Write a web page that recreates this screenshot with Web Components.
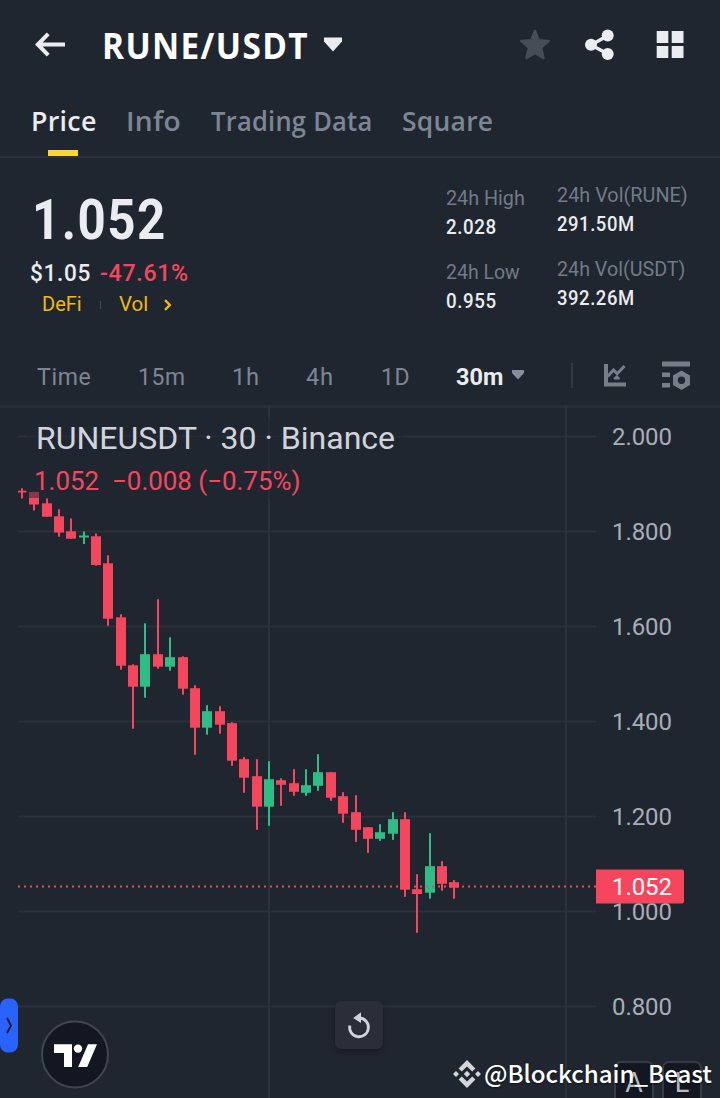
<!DOCTYPE html>
<html lang="en">
<head>
<meta charset="utf-8">
<title>RUNE/USDT</title>
<style>
    html, body {
        margin: 0;
        height: 1098px;
        overflow: hidden;
        background: #202630;
    }
</style>
</head>
<body>
<trade-page></trade-page>

<script>
class BaseElement extends HTMLElement {
    constructor() {
        super();
        this.attachShadow({mode: 'open'});
        const template = document.createElement('template');
        template.innerHTML = this.getTemplate().trim();
        this.shadowRoot.append(template.content.cloneNode(true));
    }
}

class TradePage extends BaseElement {
    getTemplate() {
        return `
            <style>
                :host {
                    display: flex;
                    flex-direction: column;
                    position: relative;
                    width: 720px;
                    height: 1098px;
                    overflow: hidden;
                    background: #202630;
                    color: #eaecef;
                    font-family: Roboto, sans-serif;
                }
                author-mark {
                    position: absolute;
                    left: 453px;
                    top: 1056px;
                }
            </style>
            <page-header></page-header>
            <page-tabs></page-tabs>
            <price-summary></price-summary>
            <interval-bar></interval-bar>
            <price-chart></price-chart>
            <author-mark></author-mark>
        `;
    }
}

class PageHeader extends BaseElement {
    getTemplate() {
        return `
            <style>
                :host {
                    display: flex;
                    align-items: center;
                    height: 90px;
                    padding: 0 36px 0 35px;
                    box-sizing: border-box;
                    font-family: "Open Sans", sans-serif;
                    color: #fff;
                }
                svg { display: block; flex: none; }
                fit-text { margin: 2px 15px 0 37px; }
                .actions { display: flex; align-items: center; gap: 35px; margin-left: auto; }
            </style>
            <svg width="30" height="26" viewBox="0 0 30 26" fill="none" stroke="#eaecef" stroke-width="4">
                <path d="M30 12.5H3M13.2 1.8L2.8 12.5L13.2 23.2"/>
            </svg>
            <fit-text w="206" size="35" weight="700" spacing=".04">RUNE/USDT</fit-text>
            <svg width="19" height="16" viewBox="-1 0 19 16"><path d="M0 0.5H18V4.5L9 14.5L0 4.5Z" fill="#eaecef"/></svg>
            <div class="actions">
                <svg width="30" height="32" viewBox="0 0 30 32">
                    <path d="M15 2L18.6 11.2L28.6 12L21 18.6L23.4 29L15 23.8L6.6 29L9 18.6L1.4 12L11.4 11.2Z" fill="#474d57" stroke="#474d57" stroke-width="2.6" stroke-linejoin="round"/>
                </svg>
                <svg width="29" height="32" viewBox="0 0 29 32" fill="#eaecef">
                    <path d="M6 16L23 6.5M6 16L23 25" stroke="#eaecef" stroke-width="3.6"/>
                    <circle cx="6" cy="15.8" r="6"/><circle cx="22.7" cy="6.4" r="6"/><circle cx="22.7" cy="25" r="6"/>
                </svg>
                <svg width="35" height="28" viewBox="0 0 35 28" fill="#eaecef">
                    <path d="M7.7 0.1H19.3V11.9H7.7ZM22.7 0.1H34.5V11.9H22.7ZM7.7 15.1H19.3V26.9H7.7ZM22.7 15.1H34.5V26.9H22.7Z"/>
                </svg>
            </div>
        `;
    }
}

class PageTabs extends BaseElement {
    getTemplate() {
        return `
            <style>
                :host {
                    display: flex;
                    gap: 30px;
                    height: 68px;
                    padding: 14px 31px 0;
                    box-sizing: border-box;
                    border-bottom: 2px solid #2b313b;
                    font-family: "Open Sans", sans-serif;
                    color: #7d8694;
                }
                .active {
                    display: flex;
                    flex-direction: column;
                    align-items: center;
                    width: 65px;
                    color: #eaecef;
                }
                .active::after {
                    content: "";
                    width: 30px;
                    height: 6.5px;
                    margin: 12px 1px 0 0;
                    background: #fcd535;
                }
            </style>
            <div class="active"><fit-text w="65" size="27.5" weight="600" spacing=".01">Price</fit-text></div>
            <fit-text w="55" size="27.5" weight="600" spacing=".01">Info</fit-text>
            <fit-text w="161" size="27.5" weight="600" spacing=".01">Trading Data</fit-text>
            <fit-text w="91" size="27.5" weight="600" spacing=".01">Square</fit-text>
        `;
    }
}

class PriceSummary extends BaseElement {
    getTemplate() {
        return `
            <style>
                :host {
                    display: flex;
                    height: 188px;
                    box-sizing: border-box;
                    padding-left: 30px;
                }
                .left { width: 416px; padding-top: 27px; }
                .big { margin-left: 2px; }
                .fiat { display: flex; gap: 10px; margin-top: 4px; }
                .down { color: #f6465d; }
                .tags { display: flex; align-items: center; margin: 4px 0 0 12px; color: #f0b90b; }
                .sep { width: 1px; height: 8px; margin: 0 18px; background: #474d57; }
                svg { margin-left: 15px; }
                .col { display: flex; flex-direction: column; gap: 24px; }
                .high { width: 111px; padding-top: 28px; }
                .vol { padding-top: 25px; }
            </style>
            <div class="left">
                <fit-text class="big" w="133" size="56" weight="700" spacing=".03">1.052</fit-text>
                <div class="fiat">
                    <fit-text w="60" size="23.5" weight="500" spacing=".03">$1.05</fit-text>
                    <fit-text class="down" w="88" size="23.5" weight="500" spacing=".03">-47.61%</fit-text>
                </div>
                <div class="tags">
                    <fit-text w="40" size="20.5">DeFi</fit-text>
                    <span class="sep"></span>
                    <fit-text w="29" size="20.5">Vol</fit-text>
                    <svg width="10" height="14" viewBox="0 0 10 14" fill="none" stroke="#f0b90b" stroke-width="2.4"><path d="M2 2.2L6.8 7L2 11.8"/></svg>
                </div>
            </div>
            <div class="col high">
                <stat-item><fit-text slot="label" w="79" size="20">24h High</fit-text><fit-text w="50" size="20" weight="500" spacing=".03">2.028</fit-text></stat-item>
                <stat-item><fit-text slot="label" w="74" size="20">24h Low</fit-text><fit-text w="50" size="20" weight="500" spacing=".03">0.955</fit-text></stat-item>
            </div>
            <div class="col vol">
                <stat-item><fit-text slot="label" w="131" size="20">24h Vol(RUNE)</fit-text><fit-text w="77" size="20" weight="500" spacing=".03">291.50M</fit-text></stat-item>
                <stat-item><fit-text slot="label" w="128" size="20">24h Vol(USDT)</fit-text><fit-text w="77" size="20" weight="500" spacing=".03">392.26M</fit-text></stat-item>
            </div>
        `;
    }
}

class StatItem extends BaseElement {
    getTemplate() {
        return `
            <style>
                :host { display: flex; flex-direction: column; gap: 4px; height: 50px; }
                .label { color: #737a87; height: 25px; }
            </style>
            <div class="label"><slot name="label"></slot></div>
            <slot></slot>
        `;
    }
}

class IntervalBar extends BaseElement {
    getTemplate() {
        return `
            <style>
                :host {
                    display: flex;
                    align-items: center;
                    height: 59px;
                    padding-left: 37px;
                    box-sizing: border-box;
                    color: #7d8694;
                }
                svg { display: block; flex: none; }
                fit-text { margin-top: 2px; }
                .on { color: #eaecef; }
            </style>
            <fit-text w="54" size="24" spacing=".03">Time</fit-text>
            <fit-text style="margin-left:47px" w="47" size="24" spacing=".03">15m</fit-text>
            <fit-text style="margin-left:47px" w="27" size="24" spacing=".03">1h</fit-text>
            <fit-text style="margin-left:47px" w="27" size="24" spacing=".03">4h</fit-text>
            <fit-text style="margin-left:48px" w="29" size="24" spacing=".03">1D</fit-text>
            <fit-text class="on" style="margin-left:46px" w="47" size="24" weight="700">30m</fit-text>
            <svg style="margin-left:9px" width="12" height="12" viewBox="0 0 12 12"><path d="M0 0H12V3L6 9.5L0 3Z" fill="#848e9c"/></svg>
            <svg style="margin-left:47px" width="2" height="25"><path d="M1 0V25" stroke="#3a404b" stroke-width="1.5"/></svg>
            <svg style="margin-left:31px" width="22" height="24" viewBox="0 0 22 24" fill="none" stroke="#777e8b">
                <path d="M2 0V20.6H22" stroke-width="4"/>
                <path d="M3.5 12.5L9.5 6L13.2 9.7L20.5 2" stroke-width="3"/>
                <path d="M12.8 11L16 14L15.5 15.5H10L9.5 14Z" fill="#777e8b" stroke="none"/>
            </svg>
            <svg style="margin-left:36px" width="28" height="30" viewBox="0 0 28 30" fill="#777e8b">
                <path d="M0 0.5H28V5.5H0ZM0 11.5H8V16H0ZM0 22H8V26.5H0Z"/>
                <path fill-rule="evenodd" d="M19.5 9.5L28 14.4V24L19.5 29L11 24V14.4ZM19.5 15.6A3.7 3.7 0 1 0 19.5 23A3.7 3.7 0 1 0 19.5 15.6Z"/>
            </svg>
        `;
    }
}

// [centre x, body top, body bottom, high, low, rising]
const CANDLES = [
    [22, 490.7, 492.5, 488.3, 498.5, 0],
    [34, 492, 504.5, 491.7, 510.5, 0],
    [47, 503.3, 516.7, 498.5, 516.7, 0],
    [59, 516.3, 532.5, 509.3, 536.7, 0],
    [71, 531.3, 538.7, 518.5, 538.7, 0],
    [84, 535.5, 537.5, 531.5, 544, 1],
    [96, 536.3, 565, 533.5, 565.7, 0],
    [108, 563.3, 618.7, 555.3, 625.7, 0],
    [121, 617.3, 665.7, 614.3, 669.7, 0],
    [133, 665.3, 686.7, 664.3, 728.7, 0],
    [145, 654.2, 686.7, 623.3, 697.7, 1],
    [158, 654.2, 666.7, 599.3, 668.7, 0],
    [170, 657.2, 666.7, 637.3, 670.7, 1],
    [183, 657.2, 688.7, 656.3, 694.7, 0],
    [195, 688.2, 727.7, 685.3, 754.7, 0],
    [207, 711.2, 727.7, 705.2, 734.7, 1],
    [220, 711.2, 724.7, 706.2, 733.7, 0],
    [232, 723.2, 760.7, 722.2, 765.8, 0],
    [244, 759.2, 777.7, 757.2, 792.8, 0],
    [257, 776.2, 806.7, 759.2, 829.8, 0],
    [269, 779.2, 806.7, 761.2, 825.8, 1],
    [281, 780.2, 784.8, 778.2, 805.8, 0],
    [294, 783.2, 791.8, 769.2, 795.8, 0],
    [306, 785.2, 792.8, 769.2, 795.8, 1],
    [318, 772.2, 785.8, 754.2, 790.8, 1],
    [331, 772.2, 797.7, 772.2, 800.8, 0],
    [343, 796.2, 813.7, 792.2, 822.8, 0],
    [356, 812.2, 829.8, 795.2, 841.8, 0],
    [368, 827.2, 838.8, 827.2, 852.8, 0],
    [380, 832.2, 838.8, 824.2, 840.8, 1],
    [393, 819.2, 833.7, 812.2, 839.8, 1],
    [405, 819.2, 889.7, 812.2, 896.8, 0],
    [417, 889.2, 894, 874.2, 932.8, 0],
    [430, 866.2, 892.7, 833.2, 898.7, 1],
    [442, 866.2, 883.8, 861.2, 890.7, 0],
    [454, 882.2, 887.7, 880.2, 898.7, 0]
];

class PriceChart extends BaseElement {
    getTemplate() {
        const prices = ['2.000', '1.800', '1.600', '1.400', '1.200', '1.000', '0.800'];
        const lines = prices.map((p, i) => `<path d="M18 ${436.6 + i * 95}H596"/>`).join('');
        const labels = prices.map((p, i) =>
            `<text x="612" y="${445.4 + i * 95}" textLength="60">${p}</text>`).join('');
        const candles = CANDLES.map(([x, top, bottom, high, low, up]) => `
            <g fill="${up ? '#2ebd85' : '#f6465d'}">
                <rect x="${x - 1}" y="${high}" width="2" height="${low - high}"/>
                <rect x="${Math.max(18, x - 5)}" y="${top}" width="${x === 22 ? 8.7 : 10}" height="${bottom - top}"/>
            </g>`).join('');
        return `
            <style>
                :host { display: block; position: relative; height: 693px; }
                .plot { display: block; font: 24px Roboto, sans-serif; }
                .legend { position: absolute; left: 26px; top: 13px; }
                .row { width: max-content; background: rgba(32, 38, 48, .5); }
                .name { height: 43px; padding: 0 8px 0 10px; color: #d1d4dc; }
                .values { display: flex; gap: 13px; height: 37px; padding: 0 6px 0 8px; color: #f6465d; }
                .name fit-text { padding-top: 2px; }
                .values fit-text { margin-top: 5px; }
                .drawer { position: absolute; left: 0; top: 593px; }
                .logo { position: absolute; left: 41px; top: 615px; }
                .reset {
                    position: absolute;
                    left: 335px;
                    top: 596px;
                    width: 48px;
                    height: 48px;
                    border-radius: 6px;
                    background: #2a2e39;
                    box-shadow: 0 3px 6px rgba(0, 0, 0, .3);
                }
                .scale { position: absolute; left: 614px; top: 656px; display: flex; gap: 8px; }
                .scale span {
                    width: 40px;
                    height: 60px;
                    box-sizing: border-box;
                    border: 2px solid #363a45;
                    border-radius: 7px;
                    background: #131722;
                    color: #b8bbc4;
                    font: 27px/40px Roboto, sans-serif;
                    text-align: center;
                }
            </style>
            <svg class="plot" width="720" height="693" viewBox="0 405 720 693">
                <path d="M0 406.5H720" stroke="#272d37" stroke-width="3"/>
                <g stroke="#2b313b" stroke-width="2">${lines}<path d="M269 405V1098M566 405V1098"/></g>
                ${candles}
                <path d="M18 886.5H596" stroke="#f6465d" stroke-width="2" stroke-dasharray="2 4"/>
                <g fill="#a9adb8">${labels}</g>
                <path d="M596 869.5H682Q684 869.5 684 871.5V901.5Q684 903.5 682 903.5H596Z" fill="#f6465d"/>
                <text x="612" y="895.4" textLength="60" fill="#fff">1.052</text>
            </svg>
            <div class="legend">
                <div class="row name"><fit-text w="359" size="30.5">RUNEUSDT · 30 · Binance</fit-text></div>
                <div class="row values">
                    <fit-text w="65" size="25.5">1.052</fit-text>
                    <fit-text w="189" size="25.5">−0.008 (−0.75%)</fit-text>
                </div>
            </div>
            <svg class="drawer" width="18" height="55" viewBox="0 0 18 55">
                <rect x="0" y="0.5" width="18" height="54" rx="8" fill="#2962ff"/>
                <path d="M7 20L11 27.5L7 35" fill="none" stroke="#131722" stroke-width="1.8"/>
            </svg>
            <svg class="logo" width="68" height="69" viewBox="41 1020 68 69">
                <circle cx="75" cy="1054.5" r="33" fill="#131722" stroke="#434651" stroke-width="2"/>
                <path d="M54 1044.3H72V1067H64V1053H54ZM88 1044.3H97L87.2 1067H78.2Z" fill="#fff"/>
                <circle cx="78" cy="1048.6" r="4.2" fill="#fff"/>
            </svg>
            <div class="reset">
                <svg width="48" height="48" viewBox="335 1001 48 48">
                    <path d="M349.8 1025.5A9.4 9.4 0 1 0 360 1018" fill="none" stroke="#d1d4dc" stroke-width="2.8"/>
                    <path d="M353.2 1018L361 1012.3V1023Z" fill="#d1d4dc"/>
                </svg>
            </div>
            <div class="scale"><span>A</span><span>L</span></div>
        `;
    }
}

class AuthorMark extends BaseElement {
    getTemplate() {
        return `
            <style>
                :host {
                    display: flex;
                    align-items: center;
                    gap: 3px;
                    height: 36px;
                    color: #fff;
                    font-family: "Noto Sans CJK SC", sans-serif;
                    text-shadow: 0 1px 2px rgba(0, 0, 0, .6);
                }
                fit-text { margin-bottom: 2px; }
            </style>
            <svg width="28" height="28" viewBox="0 0 28 28" fill="#d5d6d8">
                <path d="M14 0L22.4 8.4L19.2 11.6L14 6.4L8.8 11.6L5.6 8.4Z"/>
                <path d="M14 28L22.4 19.6L19.2 16.4L14 21.6L8.8 16.4L5.6 19.6Z"/>
                <path d="M3 11L6 14L3 17L0 14ZM25 11L28 14L25 17L22 14ZM14 10.8L17.2 14L14 17.2L10.8 14Z"/>
            </svg>
            <fit-text w="228" size="24" weight="500">@Blockchain_Beast</fit-text>
        `;
    }
}

// One line of text, stretched or squeezed to the width in "w"
class FitText extends BaseElement {
    getTemplate() {
        return `
            <style>
                :host { display: block; flex: none; line-height: 1.25; white-space: nowrap; }
                span { display: inline-block; transform-origin: 0 0; }
            </style>
            <span><slot></slot></span>
        `;
    }

    connectedCallback() {
        const w = Number(this.getAttribute('w'));
        const size = Number(this.getAttribute('size'));
        const spacing = size * (this.getAttribute('spacing') || 0);
        this.style.width = w + 'px';
        this.style.height = size * 1.25 + 'px';
        this.style.fontSize = size + 'px';
        this.style.letterSpacing = spacing + 'px';
        this.style.fontWeight = this.getAttribute('weight') || 400;
        const span = this.shadowRoot.querySelector('span');
        span.style.transform = `scaleX(${w / (span.offsetWidth - spacing)})`;
    }
}

customElements.define('trade-page', TradePage);
customElements.define('page-header', PageHeader);
customElements.define('page-tabs', PageTabs);
customElements.define('price-summary', PriceSummary);
customElements.define('stat-item', StatItem);
customElements.define('interval-bar', IntervalBar);
customElements.define('price-chart', PriceChart);
customElements.define('author-mark', AuthorMark);
customElements.define('fit-text', FitText);
</script>
</body>
</html>
